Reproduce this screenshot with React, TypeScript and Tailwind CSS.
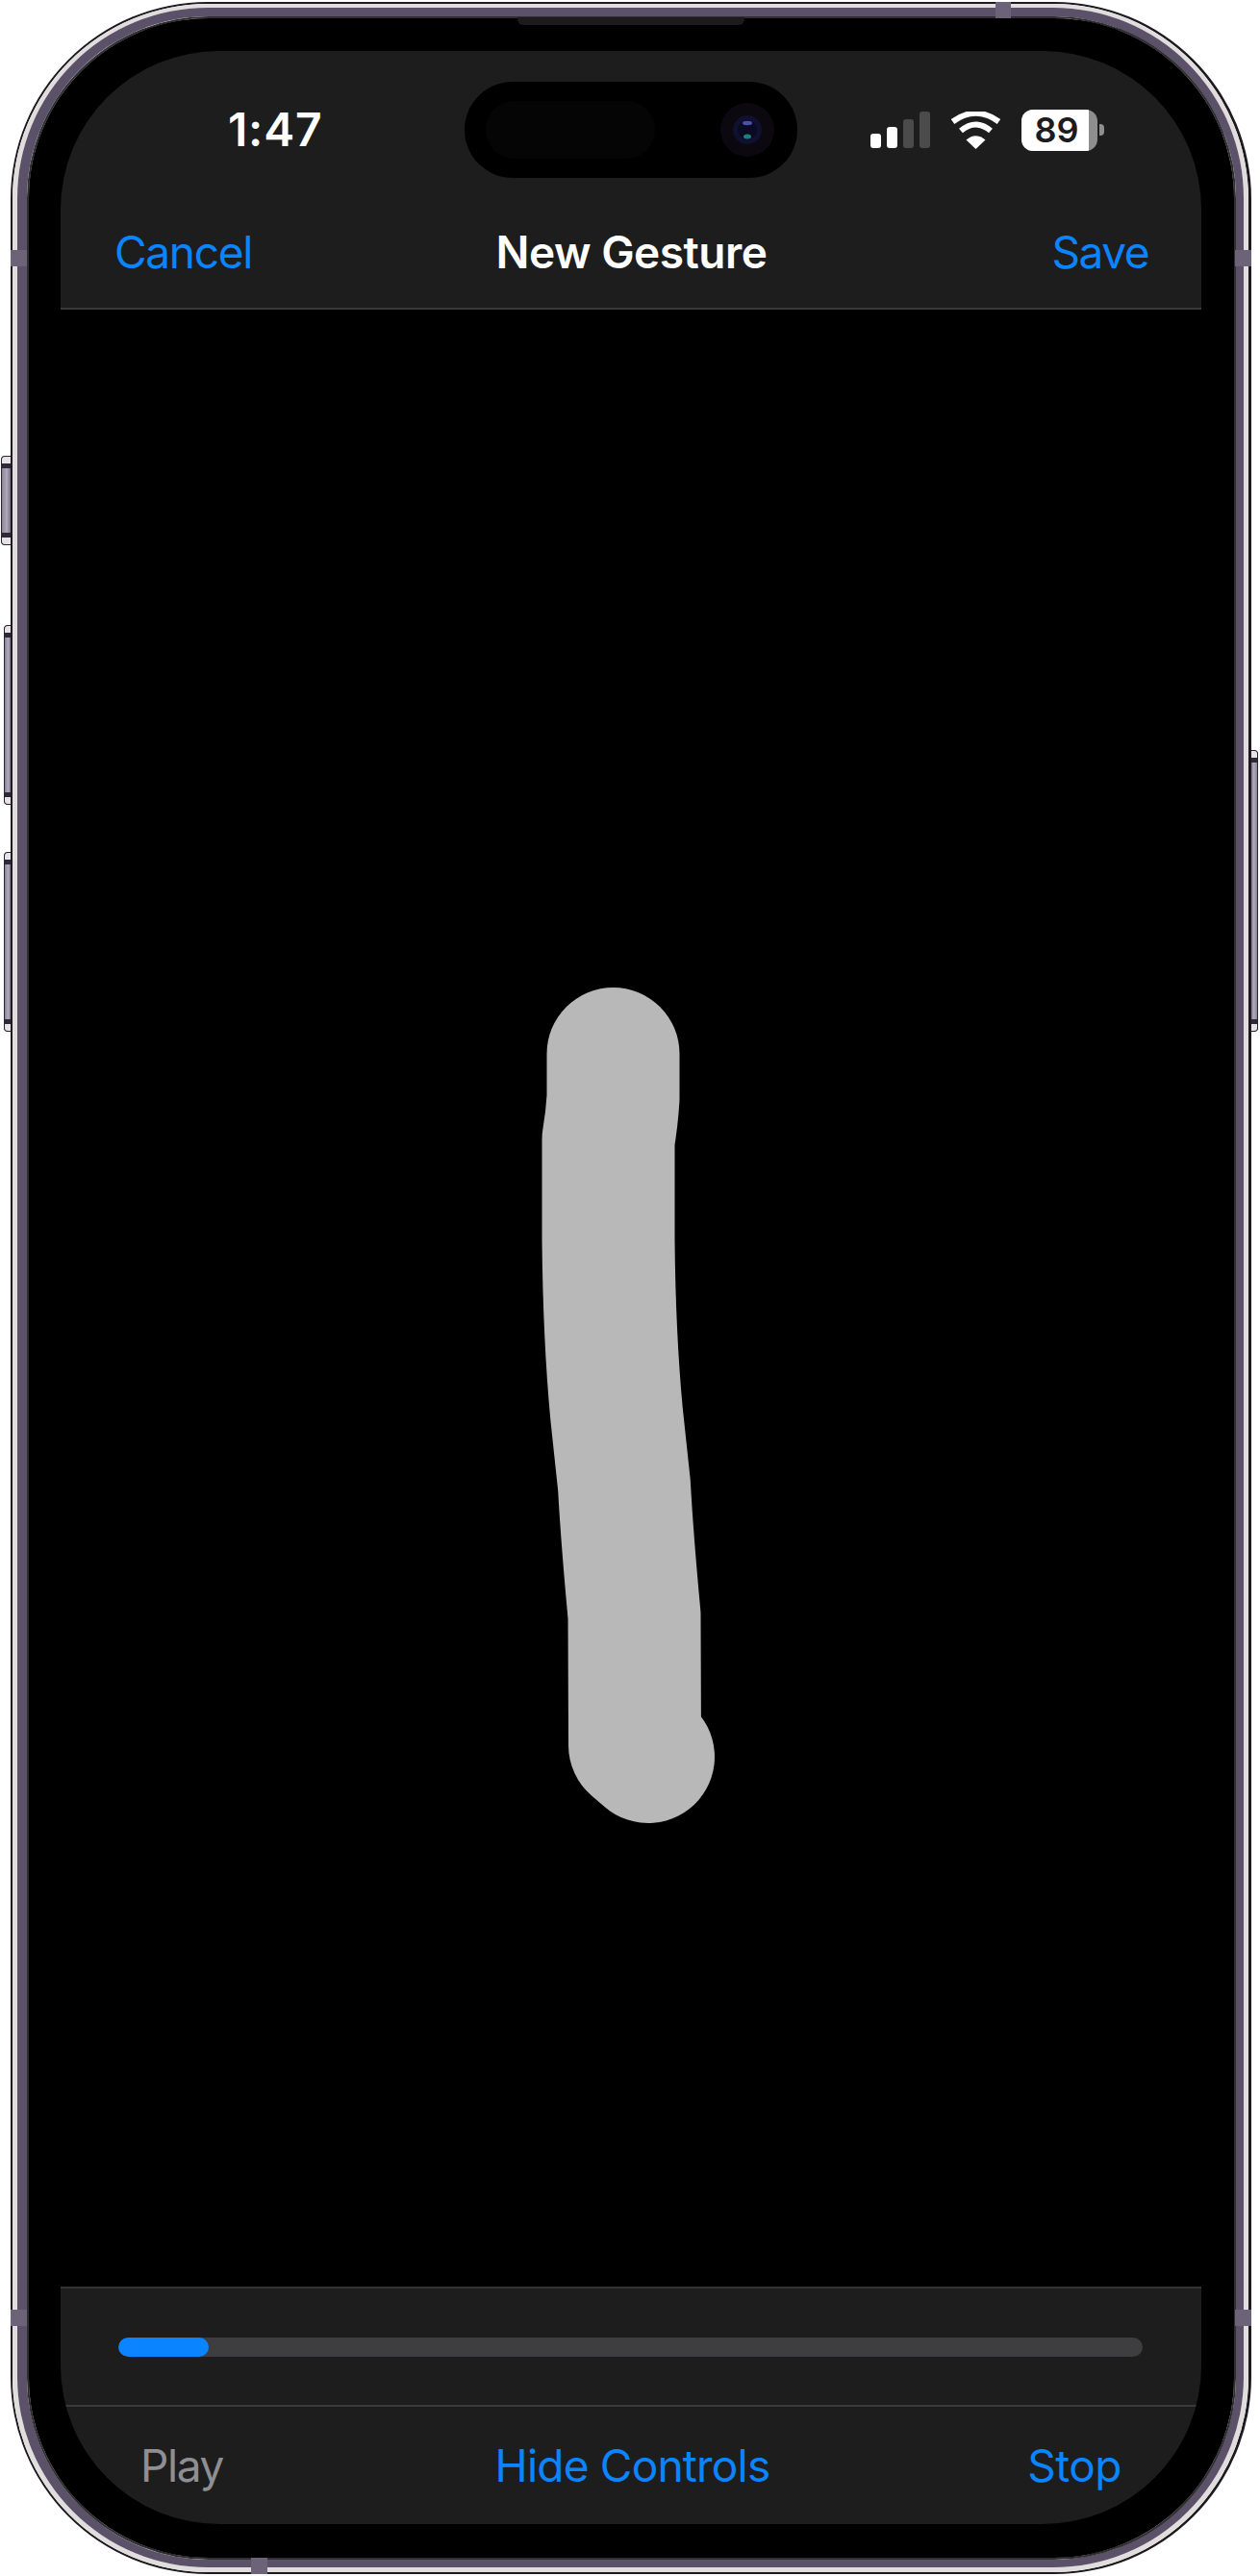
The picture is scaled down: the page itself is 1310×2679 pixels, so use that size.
const BLUE = 'text-[#0a84ff]';

function SideButton({ className }: { className: string }) {
  return (
    <div className={`absolute flex flex-col rounded-l-[4px] border border-r-0 border-[#29242f] bg-[#29242f] ${className}`}>
      <div className="h-[7px] shrink-0 rounded-tl-[3px] bg-[#e6e2e6]" />
      <div className="h-[5px] shrink-0 bg-[#2e2936]" />
      <div className="min-h-0 flex-1 bg-gradient-to-r from-[#8b8396] via-[#b0a9bb] to-[#6b6277]" />
      <div className="h-[5px] shrink-0 bg-[#2e2936]" />
      <div className="h-[7px] shrink-0 rounded-bl-[3px] bg-[#e6e2e6]" />
    </div>
  );
}

function RightButton({ className }: { className: string }) {
  return (
    <div className={`absolute flex flex-col rounded-r-[4px] border border-l-0 border-[#29242f] bg-[#29242f] ${className}`}>
      <div className="h-[7px] shrink-0 rounded-tr-[3px] bg-[#e6e2e6]" />
      <div className="h-[5px] shrink-0 bg-[#2e2936]" />
      <div className="min-h-0 flex-1 bg-gradient-to-l from-[#8b8396] via-[#b0a9bb] to-[#6b6277]" />
      <div className="h-[5px] shrink-0 bg-[#2e2936]" />
      <div className="h-[7px] shrink-0 rounded-br-[3px] bg-[#e6e2e6]" />
    </div>
  );
}

function SignalBars() {
  const bars = [
    ['h-[15px]', 'bg-white'],
    ['h-[22px]', 'bg-white'],
    ['h-[30px]', 'bg-[#4b4b4b]'],
    ['h-[38px]', 'bg-[#4b4b4b]'],
  ];
  return (
    <div className="flex items-end gap-[6px]">
      {bars.map(([h, bg], i) => (
        <div key={i} className={`w-[11px] rounded-[3px] ${h} ${bg}`} />
      ))}
    </div>
  );
}

function WifiIcon() {
  return (
    <svg width="53" height="39" viewBox="0 0 53 39" className="block">
      <path d="M26.5 39 L16.5 29.5 Q26.5 21 36.5 29.5 Z" fill="#fff" />
      <path d="M11 20 Q26.5 7 42 20" fill="none" stroke="#fff" strokeWidth="6" />
      <path d="M2.5 10.5 Q26.5 -7 50.5 10.5" fill="none" stroke="#fff" strokeWidth="6" />
    </svg>
  );
}

function Battery() {
  return (
    <div className="flex items-center gap-[2px]">
      <div className="flex h-[43px] w-[79px] overflow-hidden rounded-[12px] bg-[#8e8e8e]">
        <div className="flex h-full w-[70px] items-center justify-center bg-white pl-[3px] font-['Inter',sans-serif] text-[36px] font-semibold text-[#1c1c1e]">
          89
        </div>
      </div>
      <div className="h-[12px] w-[5px] rounded-r-[4px] bg-[#8e8e8e]" />
    </div>
  );
}

function DynamicIsland() {
  return (
    <div className="flex h-[100px] w-[346px] items-center justify-between rounded-full bg-black pl-[22px] pr-[24px]">
      <div className="h-[60px] w-[176px] rounded-full bg-[#050505]" />
      <div className="flex h-[56px] w-[56px] items-center justify-center rounded-full bg-[#0b0810]">
        <svg width="32" height="32" viewBox="0 0 32 32" className="block">
          <circle cx="16" cy="16" r="15" fill="#101030" />
          <circle cx="16" cy="16" r="10" fill="#0a0a22" />
          <ellipse cx="16" cy="9" rx="5" ry="2.2" fill="#4e4eb0" />
          <ellipse cx="16" cy="23" rx="4" ry="2.5" fill="#1b7f7a" />
        </svg>
      </div>
    </div>
  );
}

export default function App() {
  return (
    <div className="relative h-[2679px] w-[1310px] overflow-hidden bg-white font-['Inter',sans-serif]">
      {/* hardware buttons */}
      <SideButton className="left-[1px] top-[474px] h-[93px] w-[11px]" />
      <SideButton className="left-[4px] top-[650px] h-[187px] w-[8px]" />
      <SideButton className="left-[4px] top-[886px] h-[187px] w-[8px]" />
      <RightButton className="left-[1300px] top-[780px] h-[293px] w-[8px]" />

      <div className="relative ml-[11px] mt-[2px] h-[2675px] w-[1290px] rounded-[205px] border-b-2 border-l-2 border-r-[3px] border-t-2 border-[#1d1a22]">
        <div className="h-full w-full rounded-[203px] border-b-[5px] border-l-[5px] border-r-[5px] border-t-4 border-[#e2dddd]">
          <div className="h-full w-full rounded-[198px] border-b-8 border-l-[10px] border-r-8 border-t-[9px] border-[#5b5168]">
            <div className="h-full w-full rounded-[189px] border-2 border-[#2e2e30]">
              <div className="h-full w-full rounded-[187px] bg-black pb-[35px] pl-[33px] pr-[34px] pt-[34px]">
                <div className="flex h-full w-full flex-col overflow-hidden rounded-[165px] bg-black">
                  <header className="h-[269px] shrink-0 border-b-2 border-[#3a3a3c] bg-[#1d1d1d]">
                    <div className="grid h-[132px] grid-cols-[420px_346px_420px] pt-[32px]">
                      <div className="flex h-[100px] items-center pl-[174px] text-[48px] font-semibold leading-none tracking-[0.8px] text-white">
                        1:47
                      </div>
                      <DynamicIsland />
                      <div className="flex h-[100px] items-center pl-[76px]">
                        <SignalBars />
                        <div className="ml-[21px]">
                          <WifiIcon />
                        </div>
                        <div className="ml-[21px]">
                          <Battery />
                        </div>
                      </div>
                    </div>
                    <div className="grid h-[135px] grid-cols-3 items-center pl-[56px] pr-[55px] pt-[18px] text-[46px] leading-none">
                      <span className={`${BLUE} tracking-[-1.3px]`}>Cancel</span>
                      <span className="whitespace-nowrap text-center font-semibold tracking-[-0.5px] text-white">New Gesture</span>
                      <span className={`${BLUE} text-right tracking-[-1.5px]`}>Save</span>
                    </div>
                  </header>

                  <main className="min-h-0 flex-1 bg-black">
                    <svg viewBox="63 323 1186 2054" className="block h-full w-full">
                      <path
                        d="M637.5 1096 L637.5 1142 Q636 1165 632.5 1185 L632.5 1290 Q633.5 1390 641 1470 L649 1545 Q652 1600 659.5 1680 L660 1815 L674 1827"
                        fill="none"
                        stroke="#b8b8b8"
                        strokeWidth="138"
                        strokeLinecap="round"
                        strokeLinejoin="round"
                      />
                    </svg>
                  </main>

                  <footer className="shrink-0 bg-[#1d1d1d]">
                    <div className="flex h-[125px] items-center border-b-2 border-t-2 border-b-[#3a3a3c] border-t-[#333335] pl-[60px] pr-[61px]">
                      <div className="h-[20px] w-full overflow-hidden rounded-full bg-[#3e3e40]">
                        <div className="h-full w-[94px] rounded-full bg-[#0a84ff]" />
                      </div>
                    </div>
                    <div className="grid h-[122px] grid-cols-3 items-center pl-[83px] pr-[83px] text-[46px] leading-none">
                      <span className="tracking-[-1.4px] text-[#8e8e93]">Play</span>
                      <span className={`${BLUE} whitespace-nowrap pl-[3px] text-center tracking-[-0.8px]`}>Hide Controls</span>
                      <span className={`${BLUE} text-right tracking-[-0.5px]`}>Stop</span>
                    </div>
                  </footer>
                </div>
              </div>
            </div>
          </div>
        </div>
      </div>

      {/* antenna bands and speaker slit lie over the frame */}
      <div className="absolute left-[1035px] top-[2px] h-[17px] w-[16px] bg-[#6d6379]" />
      <div className="absolute left-[261px] top-[2660px] h-[17px] w-[17px] bg-[#6d6379]" />
      <div className="absolute left-[11px] top-[260px] h-[17px] w-[17px] bg-[#6d6379]" />
      <div className="absolute left-[1284px] top-[260px] h-[17px] w-[17px] bg-[#6d6379]" />
      <div className="absolute left-[11px] top-[2402px] h-[17px] w-[17px] bg-[#6d6379]" />
      <div className="absolute left-[1284px] top-[2402px] h-[17px] w-[17px] bg-[#6d6379]" />
      <div className="absolute left-[538px] top-[18px] h-[8px] w-[236px] rounded-b-[6px] bg-[#1c1c1c]" />
    </div>
  );
}
